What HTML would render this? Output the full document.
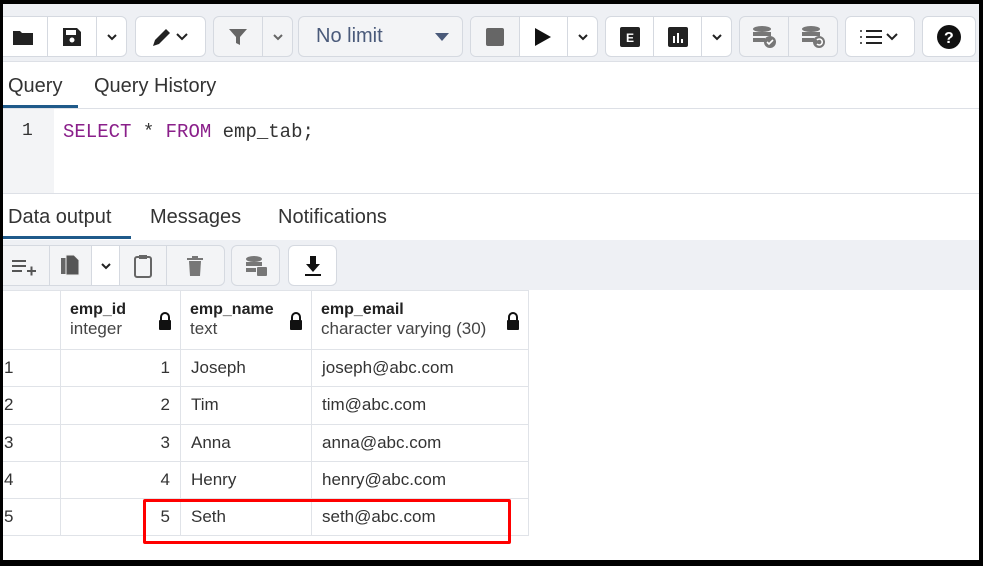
<!DOCTYPE html>
<html><head><meta charset="utf-8"><style>
*{box-sizing:border-box;margin:0;padding:0}
body{width:983px;height:566px;background:#000;position:relative;overflow:hidden;font-family:"Liberation Sans",sans-serif;color:#222}
.in{position:absolute;left:3px;top:4px;width:976px;height:556px;background:#fff;overflow:hidden}
.tb{position:absolute;left:0;top:0;width:976px;height:58px;background:#eef0f4;border-bottom:1px solid #dde0e6}
.g{position:absolute;top:12px;height:41px;border:1px solid #d5d9e0;border-radius:6px;background:#fff;display:flex;overflow:hidden}
.g.gr{background:#f3f4f6}
.g>div{height:100%;display:flex;align-items:center;justify-content:center;border-right:1px solid #d5d9e0}
.g>div:last-child{border-right:none}
.chev{width:10px;height:10px}
.tab{position:absolute;font-size:20px;color:#333}
.ul{position:absolute;height:3px;background:#1f5a8a}
.hl{position:absolute;left:0;width:976px;height:1px;background:#dde0e6}
.tb2{position:absolute;left:0;top:236px;width:976px;height:50px;background:#eef0f4}
table{position:absolute;left:-6px;top:286px;border-collapse:collapse;font-size:17px}
td{border:1px solid #e0e3e8;height:37.3px;padding:0 10px;color:#333}
th{border:1px solid #e0e3e8;height:59px;text-align:left;font-weight:normal;padding:0 9px;vertical-align:middle;position:relative}
th b{font-size:16px;display:block;color:#222}
th span{font-size:17px;color:#444}
.lock{position:absolute;right:8px;top:21px}
</style></head><body><div class="in">
<div class="tb">
 <div class="g" style="left:-6px;width:130px">
  <div style="width:51px"><svg width="22" height="18"><path d="M1 3h7l2 2h11v12H1z" fill="#222"/></svg></div>
  <div style="width:50px"><svg width="20" height="20"><path d="M1 1h14l4 4v14H1z" fill="#222"/><rect x="4" y="3" width="10" height="5" fill="#fff"/><circle cx="10" cy="13" r="2.5" fill="#fff"/></svg></div>
  <div style="width:29px"><svg class="chev" viewBox="0 0 10 10"><path d="M1 3l4 4 4-4" stroke="#222" stroke-width="2" fill="none"/></svg></div>
 </div>
 <div class="g" style="left:132px;width:71px"><div style="width:100%"><svg width="40" height="22"><path d="M2 20l2-6L15 3l4 4L8 18z" fill="#222"/><path d="M26 8l5 5 5-5" stroke="#222" stroke-width="2" fill="none"/></svg></div></div>
 <div class="g gr" style="left:210px;width:80px">
  <div style="width:50px"><svg width="20" height="20"><path d="M1 2h18l-7 8v8l-4-2v-6z" fill="#666"/></svg></div>
  <div style="width:29px"><svg class="chev" viewBox="0 0 10 10"><path d="M1 3l4 4 4-4" stroke="#666" stroke-width="2" fill="none"/></svg></div>
 </div>
 <div class="g gr" style="left:295px;width:165px"><div style="width:100%;justify-content:flex-start;padding-left:17px;font-size:20px;color:#4a5a7a">No limit<svg width="14" height="8" style="margin-left:52px"><path d="M0 0h14L7 8z" fill="#4a5a7a"/></svg></div></div>
 <div class="g" style="left:467px;width:128px">
  <div style="width:49px;background:#f3f4f6"><svg width="18" height="18"><rect width="18" height="18" rx="2" fill="#666"/></svg></div>
  <div style="width:49px"><svg width="18" height="20"><path d="M1 1l16 9-16 9z" fill="#111"/></svg></div>
  <div style="width:29px"><svg class="chev" viewBox="0 0 10 10"><path d="M1 3l4 4 4-4" stroke="#222" stroke-width="2" fill="none"/></svg></div>
 </div>
 <div class="g" style="left:602px;width:127px">
  <div style="width:49px"><svg width="20" height="20"><rect width="20" height="20" rx="2" fill="#222"/><text x="6" y="15" fill="#fff" font-size="12" font-weight="bold" font-family="Liberation Sans">E</text></svg></div>
  <div style="width:49px"><svg width="20" height="20"><rect width="20" height="20" rx="2" fill="#222"/><path d="M6 9v7M10 6v10M14 12v4" stroke="#fff" stroke-width="2"/></svg></div>
  <div style="width:29px"><svg class="chev" viewBox="0 0 10 10"><path d="M1 3l4 4 4-4" stroke="#222" stroke-width="2" fill="none"/></svg></div>
 </div>
 <div class="g gr" style="left:736px;width:99px">
  <div style="width:49px"><svg width="26" height="24"><ellipse cx="11" cy="4" rx="9" ry="3" fill="#777"/><rect x="2" y="7" width="18" height="4" fill="#777"/><rect x="2" y="13" width="12" height="4" fill="#777"/><circle cx="19" cy="17" r="6" fill="#777"/><path d="M16 17l2 2 4-4" stroke="#fff" stroke-width="1.6" fill="none"/></svg></div>
  <div style="width:49px"><svg width="26" height="24"><ellipse cx="11" cy="4" rx="9" ry="3" fill="#777"/><rect x="2" y="7" width="18" height="4" fill="#777"/><rect x="2" y="13" width="12" height="4" fill="#777"/><circle cx="19" cy="17" r="6" fill="#777"/><path d="M17 19a3 3 0 1 0 0-4" stroke="#fff" stroke-width="1.6" fill="none"/></svg></div>
 </div>
 <div class="g" style="left:842px;width:70px"><div style="width:100%"><svg width="44" height="20"><path d="M8 4h16M8 10h16M8 16h16" stroke="#222" stroke-width="2"/><path d="M2 4h2M2 10h2M2 16h2" stroke="#222" stroke-width="1.5"/><path d="M29 7l5 5 5-5" stroke="#222" stroke-width="2" fill="none"/></svg></div></div>
 <div class="g" style="left:919px;width:54px"><div style="width:100%"><svg width="24" height="24"><circle cx="12" cy="12" r="12" fill="#111"/><text x="7" y="18" fill="#fff" font-size="16" font-weight="bold" font-family="Liberation Sans">?</text></svg></div></div>
</div>
<div class="tab" style="left:5px;top:71px">Query</div>
<div class="tab" style="left:91px;top:71px">Query History</div>
<div class="ul" style="left:0;top:101px;width:75px"></div>
<div class="hl" style="top:104px"></div>
<div style="position:absolute;left:0;top:105px;width:51px;height:84px;background:#f3f4f6"></div>
<div style="position:absolute;left:19px;top:117px;font-family:'Liberation Mono',monospace;font-size:18px;color:#333">1</div>
<div style="position:absolute;left:60px;top:117px;font-family:'Liberation Mono',monospace;font-size:19px;color:#333"><span style="color:#8a1f8a">SELECT</span> * <span style="color:#8a1f8a">FROM</span> emp_tab;</div>
<div class="hl" style="top:189px"></div>
<div class="tab" style="left:5px;top:202px">Data output</div>
<div class="tab" style="left:147px;top:202px">Messages</div>
<div class="tab" style="left:275px;top:202px">Notifications</div>
<div class="ul" style="left:0;top:232px;width:128px"></div>
<div class="tb2">
 <div class="g gr" style="left:-6px;top:5px;width:228px">
  <div style="width:52px"><svg width="30" height="20"><path d="M4 5h14M4 10h14M4 15h10M19 15h9M23.5 10.5v9" stroke="#555" stroke-width="2"/></svg></div>
  <div style="width:43px"><svg width="22" height="24"><path d="M2 4h10v16H2z" fill="#666"/><path d="M7 1h8l5 5v15H7z" fill="#555" stroke="#eee"/></svg></div>
  <div style="width:28px;background:#fff"><svg class="chev" viewBox="0 0 10 10"><path d="M1 3l4 4 4-4" stroke="#222" stroke-width="2" fill="none"/></svg></div>
  <div style="width:47px"><svg width="20" height="24"><rect x="2" y="3" width="16" height="20" rx="2" stroke="#666" stroke-width="2" fill="none"/><rect x="6" y="1" width="8" height="4" fill="#666"/></svg></div>
  <div style="width:58px"><svg width="18" height="22"><path d="M1 4h16M6 2h6" stroke="#777" stroke-width="2"/><path d="M3 6h12l-1 15H4z" fill="#777"/></svg></div>
 </div>
 <div class="g gr" style="left:228px;top:5px;width:49px"><div style="width:100%"><svg width="24" height="22"><ellipse cx="10" cy="4" rx="8" ry="3" fill="#777"/><rect x="2" y="7" width="16" height="4" fill="#777"/><rect x="2" y="13" width="10" height="4" fill="#777"/><rect x="13" y="12" width="10" height="9" rx="1" fill="#777"/></svg></div></div>
 <div class="g" style="left:285px;top:5px;width:49px"><div style="width:100%"><svg width="20" height="22"><path d="M7 1h6v8h4l-7 8-7-8h4z" fill="#111"/><path d="M2 20h16" stroke="#111" stroke-width="2"/></svg></div></div>
</div>
<table>
<tr><th style="width:63px"></th><th style="width:120px"><b>emp_id</b><span>integer</span><svg class="lock" width="14" height="18"><path d="M3 8V5a4 4 0 0 1 8 0v3" stroke="#111" stroke-width="2" fill="none"/><rect x="1" y="8" width="12" height="10" rx="1" fill="#111"/></svg></th><th style="width:131px"><b>emp_name</b><span>text</span><svg class="lock" width="14" height="18"><path d="M3 8V5a4 4 0 0 1 8 0v3" stroke="#111" stroke-width="2" fill="none"/><rect x="1" y="8" width="12" height="10" rx="1" fill="#111"/></svg></th><th style="width:217px"><b>emp_email</b><span>character varying (30)</span><svg class="lock" width="14" height="18"><path d="M3 8V5a4 4 0 0 1 8 0v3" stroke="#111" stroke-width="2" fill="none"/><rect x="1" y="8" width="12" height="10" rx="1" fill="#111"/></svg></th></tr>
<tr><td style="padding-left:6px">1</td><td style="text-align:right">1</td><td>Joseph</td><td>joseph@abc.com</td></tr>
<tr><td style="padding-left:6px">2</td><td style="text-align:right">2</td><td>Tim</td><td>tim@abc.com</td></tr>
<tr><td style="padding-left:6px">3</td><td style="text-align:right">3</td><td>Anna</td><td>anna@abc.com</td></tr>
<tr><td style="padding-left:6px">4</td><td style="text-align:right">4</td><td>Henry</td><td>henry@abc.com</td></tr>
<tr><td style="padding-left:6px">5</td><td style="text-align:right">5</td><td>Seth</td><td>seth@abc.com</td></tr>
</table>
<div style="position:absolute;left:140px;top:495px;width:368px;height:45px;border:3px solid #f00;border-radius:2px"></div>
</div></body></html>
